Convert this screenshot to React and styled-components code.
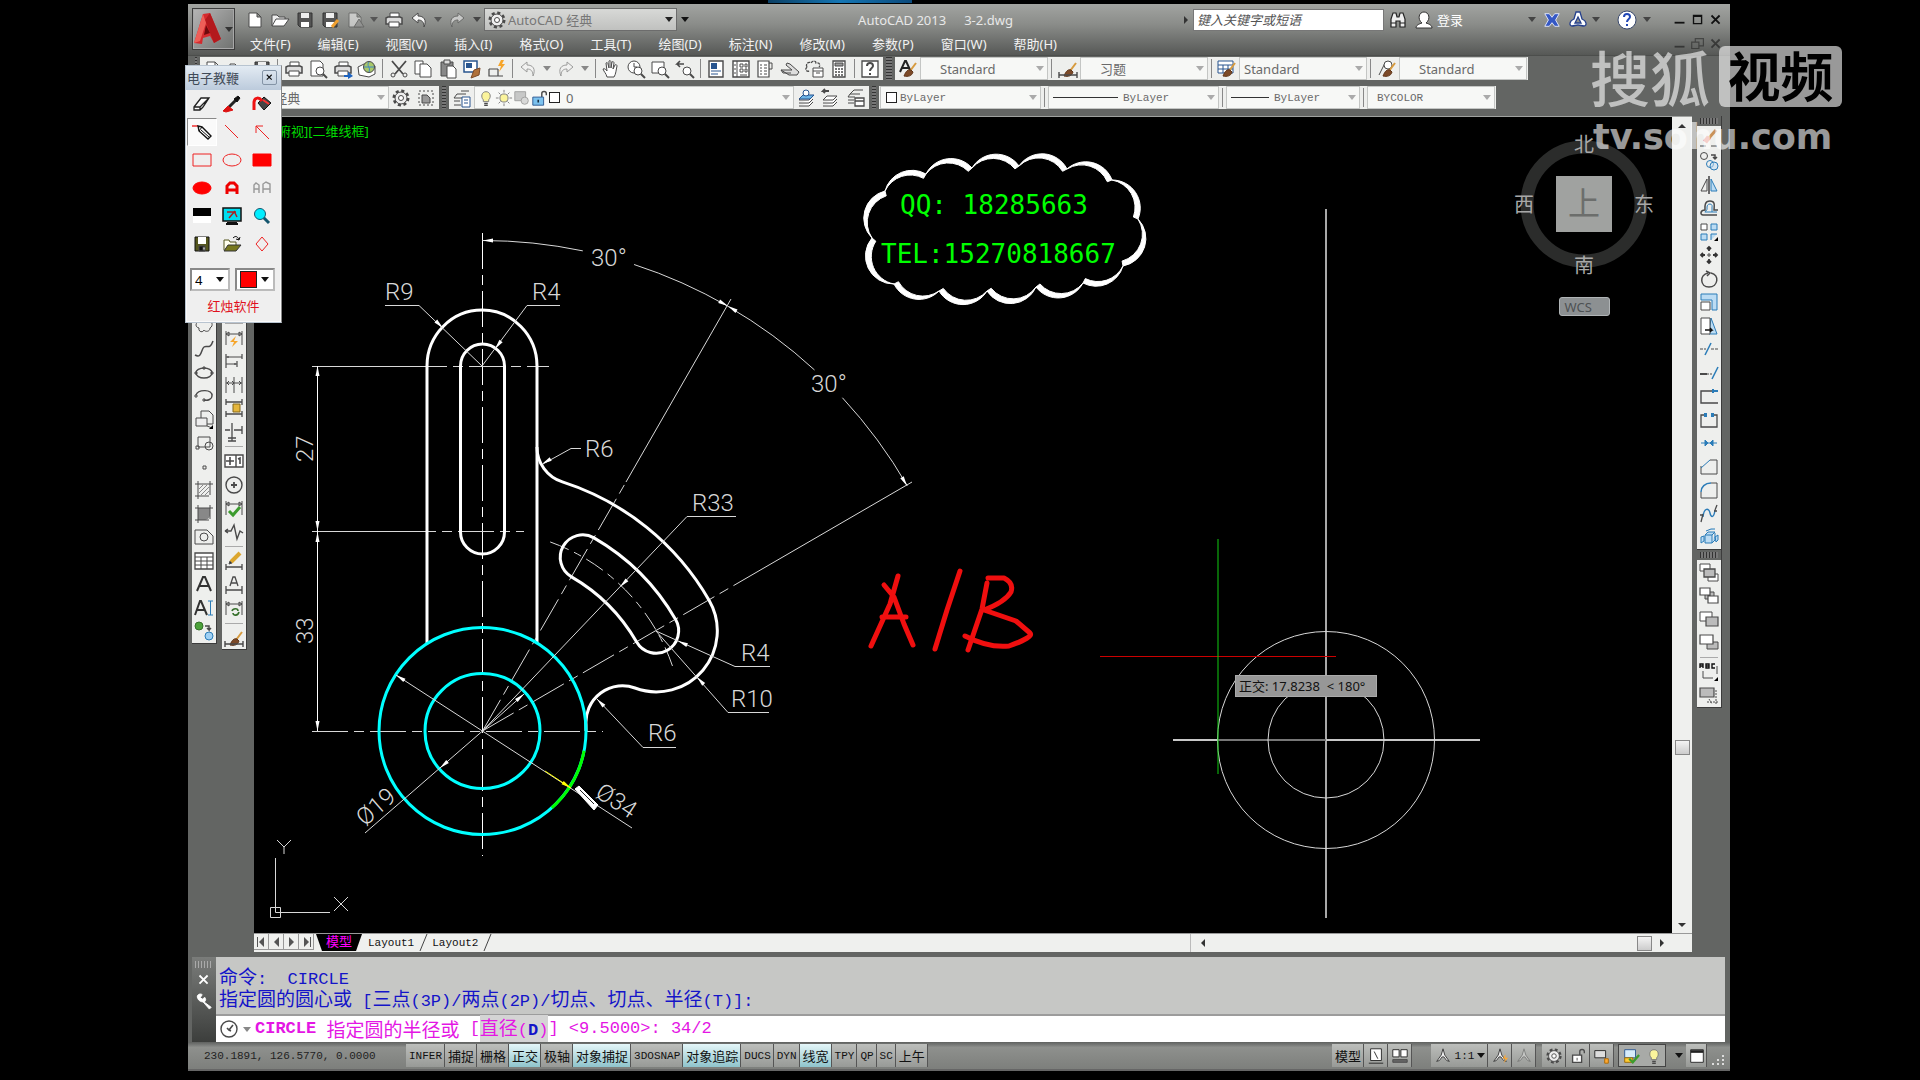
import styled, { createGlobalStyle, css } from 'styled-components';

const GlobalStyle = createGlobalStyle`
  *, *::before, *::after {
    box-sizing: border-box;
  }

  body {
    margin: 0;
    background-color: #000;
    font-family: 'Noto Sans', 'Noto Sans CJK SC', sans-serif;
    font-size: 13px;
  }

  button, input, select {
    font: inherit;
    color: inherit;
    margin: 0;
    padding: 0;
    border: 0;
    border-radius: 0;
    background: none;
    outline: none;
  }
`;

/* ---------- Icons, all on a 20 x 20 grid ---------- */

const BLUE = '#2b7cb8';

const sheet = <path d='M4 3h8l4 4v10H4zM12 3v4h4' fill='#fff' />;
const floppy = (
  <>
    <path d='M3 3h14v14H5l-2-2z' fill='#555' stroke='#333' />
    <path d='M6 3h8v5H6z' fill='#eee' stroke='none' />
    <path d='M6 12h8v5H6z' fill='#fff' stroke='none' />
  </>
);
const printer = (
  <>
    <path d='M6 7V3h9v4' fill='#fff' />
    <path d='M2 8l2-1h12l2 1v6H2z' fill='#ddd' strokeWidth='1.5' />
    <path d='M5 12h10v5H5z' fill='#fff' />
  </>
);
const lens = (
  <>
    <circle cx='12' cy='12' r='4' fill='#fff' />
    <path d='M15 15l4 4' strokeWidth='2' />
  </>
);
const brush = (
  <>
    <path d='M18 4l-6 8' stroke='#d79b3f' strokeWidth='2' />
    <path d='M13 11c-3-1-5 1-7 6 4 1 8 0 9-4z' fill='#7c4a28' stroke='#5f3518' />
  </>
);
const undo = <path d='M3 8l6-5v3c6 0 9 4 6 11 0-5-2-7-6-7v3z' fill='#f4f4f4' />;
const redo = <path d='M17 8l-6-5v3c-6 0-9 4-6 11 0-5 2-7 6-7v3z' fill='#f4f4f4' />;
const dimBase = <path d='M2 3v14M18 3v14M2 6h16M2 6l3-2v4zM18 6l-3-2v4z' />;
const layers = <path d='M2 12l4-4h10l-4 4zM2 15l10 0 4-4M2 18h10l4-4' fill='#fff' />;
const gear = (
  <>
    <circle cx='10' cy='10' r='7' strokeWidth='3' strokeDasharray='3 2.5' />
    <circle cx='10' cy='10' r='6' fill='#eee' />
    <circle cx='10' cy='10' r='2.5' fill='#fff' />
  </>
);
const bulb = (
  <>
    <path d='M7 12C4 9 5 3 10 3s6 6 3 9v2H7z' fill='#fbf49c' stroke='#777' />
    <path d='M8 16h4M8 18h4' strokeWidth='1.5' />
  </>
);
const unlock = (
  <>
    <path d='M12 9V5c0-3 5-3 5 0v2' strokeWidth='1.5' />
    <path d='M4 9h10v8H4z' fill='#fff' strokeWidth='1.5' />
    <path d='M9 12v3' />
  </>
);
const annot = <path d='M10 2l2 7 5 7-3-1-3-4H9l-3 4-3 1 5-7z' fill='#eee' stroke='#333' />;

const glyphs = {
  sheet,
  floppy,
  printer,
  undo,
  redo,
  gear,
  bulb,
  unlock,
  annot,
  folder: (
    <>
      <path d='M2 16V5h5l2 2h6v2' fill='#eee' />
      <path d='M2 16l4-7h13l-5 7z' fill='#fff' />
    </>
  ),
  floppyEdit: (
    <>
      {floppy}
      <path d='M18 10l-6 7' stroke='#f0a030' strokeWidth='3' />
    </>
  ),
  cloudSheet: (
    <g opacity='.5'>
      {sheet}
      <path d='M9 17l5-8 5 8z' fill='#999' />
    </g>
  ),
  preview: (
    <>
      <path d='M3 2h9l3 3v12H3z' fill='#fff' />
      {lens}
    </>
  ),
  publish: (
    <>
      {printer}
      <path d='M11 16h4v-3l5 4-5 3v-2h-4z' fill='#1d63c0' stroke='none' />
    </>
  ),
  cube: (
    <>
      <path d='M1 8l6-3 11 2v8l-6 3-10-2z' fill='#fff' />
      <circle cx='12' cy='8' r='5.5' fill='#a9c96a' />
      <path d='M12 3c-3 4 2 5 0 10M7 8h10' stroke='#3f86c4' />
    </>
  ),
  cut: (
    <>
      <path d='M3 2l11 13M17 2L6 15' strokeWidth='1.8' />
      <circle cx='4' cy='16' r='2' />
      <circle cx='16' cy='16' r='2' />
    </>
  ),
  copy: (
    <>
      <path d='M2 2h8v13H2z' fill='#fff' />
      <path d='M7 5h7l4 4v9H7z' fill='#fff' />
    </>
  ),
  paste: (
    <>
      <path d='M3 3h12v14H3z' fill='#888' />
      <path d='M6 1h6v4H6z' fill='#ddd' />
      <path d='M9 7h6l3 3v9H9z' fill='#fff' />
    </>
  ),
  match: (
    <>
      <path d='M2 2h13v11H2z' fill='#fff' stroke='#28558f' strokeWidth='1.5' />
      <path d='M4 4h6v5H4z' fill='#28558f' stroke='none' />
      <path d='M12 11l6-2-1 7-8 3z' fill='#b0713a' stroke='#7c4a28' />
    </>
  ),
  block: (
    <>
      <path d='M2 10h9M2 10v7h9v-7M2 17h14' strokeWidth='1.2' />
      <path d='M14 1l-3 6h3l-2 6 6-8h-3l2-4z' fill='#f6a52a' stroke='none' />
    </>
  ),
  pan: <path d='M6 18c-1-4-3-5-4-8 2-1 3 1 4 2L5 4c1-1 2 0 2 1l1 4V2c1-1 2 0 2 1v6l1-6c1-1 2 0 2 1l-1 6 2-4c1-1 2 0 2 1-1 4-1 8-3 11z' fill='#fff' />,
  zoomTime: (
    <>
      <circle cx='8' cy='8' r='6' fill='#fff' />
      <path d='M8 4v4h3' />
      {lens}
    </>
  ),
  zoomWin: (
    <>
      <path d='M2 3h12v11H2z' fill='#fff' />
      {lens}
    </>
  ),
  zoomPrev: (
    <>
      <path d='M9 5H2l3-3M2 5l3 3' strokeWidth='1.6' />
      {lens}
    </>
  ),
  props: (
    <>
      <path d='M3 2h14v16H3z' fill='#fff' strokeWidth='1.4' />
      <path d='M5 4h6v6H5z' fill='#28558f' stroke='none' />
      <path d='M5 12h10M5 15h7' stroke='#28558f' />
    </>
  ),
  center: (
    <>
      <path d='M2 2h16v16H2z' fill='#fff' strokeWidth='1.4' />
      <path d='M6 2v16M9 5h3v3H9zM14 5h2v3h-2zM9 10h3v3H9zM14 10h2v3h-2zM3 6h2M3 10h2M3 14h2M9 16h7' />
    </>
  ),
  palettes: (
    <>
      <path d='M3 2h11v16H3z' fill='#fff' strokeWidth='1.2' />
      <path d='M14 4h3v6h-3M5 6h2M9 6h3M5 9h2M9 9h3M5 12h2M9 12h3M5 15h2M9 15h3' />
    </>
  ),
  sheets: <path d='M1 11l8 5h8l2-3-9-8-3-1-1 2 6 5H1l2 3h8' fill='#ddd' />,
  markup: (
    <>
      <path d='M3 8c-2-3 2-6 4-4 2-3 5-2 5 0 3-1 5 2 3 4M3 8c-3 3 0 5 3 4' strokeDasharray='3 1' strokeWidth='1.3' />
      <path d='M9 9h10v9H9zM9 12h10M12 14h4' fill='#fff' />
    </>
  ),
  calc: (
    <>
      <path d='M4 2h12v16H4z' fill='#fff' strokeWidth='1.3' />
      <path d='M6 4h8v3H6z' fill='#999' />
      <path d='M6 10h2M9 10h2M12 10h2M6 13h2M9 13h2M12 13h2M6 16h2M9 16h2M12 16h2' strokeWidth='1.6' />
    </>
  ),
  help: (
    <>
      <path d='M2 2h16v16H2z' fill='#fff' strokeWidth='1.3' />
      <path d='M7 7c0-4 6-4 6 0 0 2-3 2-3 5M10 14v2' strokeWidth='2' />
    </>
  ),
  textStyle: (
    <>
      <path d='M2 13L7 2h1l5 11M4 9h7' stroke='#222' strokeWidth='2' />
      {brush}
    </>
  ),
  dimStyle: (
    <>
      {brush}
      <path d='M1 13v6M19 13v6M1 16h18' strokeWidth='1.4' />
    </>
  ),
  tableStyle: (
    <>
      <path d='M1 2h15v12H1zM1 6h15M6 6v8M11 6v8M1 10h15' fill='#fff' stroke='#28558f' />
      {brush}
    </>
  ),
  leaderStyle: (
    <>
      <path d='M2 16L8 4' />
      <circle cx='11' cy='6' r='4' fill='#fff' />
      {brush}
    </>
  ),
  wsSave: (
    <>
      <path d='M3 3h14v14H3z' strokeDasharray='2 2' />
      <path d='M6 7h5l3 3v5H6z' fill='#999' />
    </>
  ),
  layerProps: (
    <>
      <path d='M9 3h8M5 6h9M2 10h8M2 13h6M2 17h7M5 6L2 10' />
      <path d='M10 9h8v10h-8z' fill='#fff' stroke='#28558f' />
      <path d='M12 12h4M12 15h4' stroke='#28558f' />
    </>
  ),
  sun: (
    <>
      <circle cx='10' cy='10' r='4.5' fill='#fbf49c' stroke='#777' />
      <path d='M10 1v3M10 16v3M1 10h3M16 10h3M4 4l2 2M14 14l2 2M4 16l2-2M14 6l2-2' stroke='#777' />
    </>
  ),
  vpFreeze: (
    <g opacity='.5'>
      <path d='M2 3h12v10H2z' fill='#999' />
      <circle cx='13' cy='13' r='4' fill='#bbb' />
    </g>
  ),
  lockBlue: (
    <>
      <path d='M12 9V5c0-3 5-3 5 0v2' strokeWidth='1.6' />
      <path d='M2 9h12v9H2z' fill='#7cc2ee' stroke='#28558f' />
      <path d='M8 12v3' stroke='#123' strokeWidth='1.6' />
    </>
  ),
  layerCur: (
    <>
      {layers}
      <path d='M2 11l4-4h11l-4 4z' fill='#6db5e8' stroke='#28558f' />
      <circle cx='9' cy='5' r='3' fill='#fff' stroke='#28558f' />
    </>
  ),
  layerPrev: (
    <>
      {layers}
      <path d='M8 3H2l2-2M2 3l2 2' strokeWidth='1.8' />
    </>
  ),
  layerState: (
    <>
      <path d='M8 2h9M4 6h10M4 6L2 9h7M8 2L4 6M2 12h6M2 15h6' />
      <path d='M9 10h9v8H9zM9 13h9' fill='#fff' strokeWidth='1.3' />
    </>
  ),

  line: <path d='M3 17L17 3' />,
  pline: <path d='M3 16V7h6c6 0 6 8 0 8' />,
  rect: <path d='M3 5h14v10H3z' />,
  circle: <circle cx='10' cy='10' r='7' />,
  arc: <path d='M3 16C4 8 9 4 17 4' />,
  polygon: <path d='M10 3l7 5-3 8H6L3 8z' />,
  cloud: <path d='M5 12c-5-1-3-7 1-6 1-4 6-4 7-1 5-2 7 5 3 7 0 4-5 4-6 2-1 3-6 2-5-2z' />,
  spline: <path d='M1 16c7 4 6-6 9-8s6 3 9-6' strokeWidth='1.5' />,
  ellipse: (
    <>
      <ellipse cx='10' cy='10' rx='8' ry='5' strokeWidth='1.4' />
      <path d='M1 9h2v2H1zM17 9h2v2h-2zM9 4h2v2H9z' />
    </>
  ),
  ellArc: (
    <>
      <path d='M2 9c2-6 17-6 16 1 0 3-4 5-8 4' strokeWidth='1.4' />
      <path d='M1 9h2v2H1zM9 13h2v2H9z' />
    </>
  ),
  insert: (
    <>
      <path d='M7 1h8l4 4v9H7z' />
      <path d='M2 8h11v8H2zM13 16l5 2' fill='#eee' />
      <path d='M19 15v4h-4z' fill='#000' stroke='none' />
    </>
  ),
  makeBlock: (
    <>
      <path d='M4 4h12v10H4z' />
      <circle cx='15' cy='13' r='4' />
      <path d='M2 13h3v3H2z' />
    </>
  ),
  point: <path d='M9 9h3v3H9z' />,
  hatch: (
    <>
      <path d='M4 1v18M16 1v14M1 4h18M1 16h14' />
      <path d='M5 9l4-4M5 13l8-8M7 15l8-8M11 15l4-4' stroke='#888' />
    </>
  ),
  gradient: (
    <>
      <path d='M4 4h12v7c0 3-3 5-6 5H4z' fill='#888' stroke='none' />
      <path d='M4 1v18M16 1v14M1 4h18M1 16h14' />
    </>
  ),
  region: (
    <>
      <path d='M1 3h12l6 6v8H1z' />
      <circle cx='10' cy='10' r='4' />
    </>
  ),
  table: (
    <>
      <path d='M1 2h18v16H1z' fill='#fff' strokeWidth='1.3' />
      <path d='M1 6h18M1 10h18M1 14h18M7 6v12M13 6v12' />
    </>
  ),
  mtext: <path d='M3 17L9 3h2l6 14M5 12h10' stroke='#333' strokeWidth='2' />,
  mtextEdit: (
    <>
      <path d='M1 17L6 3h1l6 14M3 12h8' stroke='#333' strokeWidth='2' />
      <path d='M14 3h5M14 17h5M16.5 3v14' stroke={BLUE} />
    </>
  ),
  addSel: (
    <>
      <circle cx='5' cy='5' r='4' fill='#4ca23a' stroke='#35702a' />
      <circle cx='15' cy='15' r='4' fill='#9fd0f4' stroke={BLUE} />
      <path d='M11 5h4v4l-2-2M15 9l2-2' strokeWidth='1.5' />
    </>
  ),

  dimQuick: (
    <>
      {dimBase}
      <path d='M12 8l-6 6h4l-2 5 6-6h-4z' fill='#f6a52a' stroke='none' />
    </>
  ),
  dimLinear: dimBase,
  dimBaseline: <path d='M2 3v14M18 3v5M2 6h16M13 10v6M2 13h11M4 5v2M11 12v2' strokeWidth='1.2' />,
  dimContinue: <path d='M2 2v16M10 2v16M18 2v16M2 8h16M5 6l-2 2 2 2M15 6l2 2-2 2M8 6l2 2-2 2' />,
  dimSpace: (
    <>
      <path d='M2 1v6M18 1v6M2 4h16M2 13v6M18 13v6M2 16h16' strokeWidth='1.3' />
      <path d='M9 6h7v8H9z' fill='#e5b63b' stroke='#86691b' />
    </>
  ),
  dimBreak: <path d='M8 1v18M4 16h8M1 8h5M10 8h8M18 4v8M4 19h8' strokeWidth='1.3' />,
  tolerance: (
    <>
      <path d='M1 4h18v12H1zM12 4v12' fill='#fff' strokeWidth='1.4' />
      <path d='M6 6v8M2 10h8M14 8l2-1v6' strokeWidth='1.6' />
    </>
  ),
  centerMark: (
    <>
      <circle cx='10' cy='10' r='8' strokeWidth='1.4' />
      <path d='M10 7v6M7 10h6' strokeWidth='1.8' />
    </>
  ),
  inspect: (
    <>
      {dimBase}
      <path d='M5 13l4 4 7-8' stroke='#3c9c2e' strokeWidth='3' />
    </>
  ),
  jog: <path d='M1 9h6l3-6 3 14 3-8 3 2M1 9l3-2M1 9l3 2' strokeWidth='1.4' />,
  dimEdit: (
    <>
      <path d='M2 13v6M18 13v6M2 16h16' strokeWidth='1.3' />
      <path d='M16 2L7 11' stroke='#dca62e' strokeWidth='4' />
      <path d='M8 12l-3 1 1-3' fill='#333' />
    </>
  ),
  dimText: <path d='M2 11v8M18 11v8M2 15h16M6 11l3-9h2l3 9M7 8h6' strokeWidth='1.3' />,
  dimUpdate: (
    <>
      {dimBase}
      <path d='M8 13c1-3 6-3 6 0M15 14c-1 4-6 4-6 1' stroke='#35702a' strokeWidth='1.6' />
    </>
  ),

  erase: (
    <>
      <path d='M17 2L9 11' stroke='#c9925a' strokeWidth='3' />
      <path d='M10 9L6 14' stroke='#e8897c' strokeWidth='5' />
      <path d='M1 18h6M12 18h6' />
    </>
  ),
  copyObj: (
    <>
      <circle cx='5' cy='5' r='3.5' />
      <path d='M12 4h4v4M14 6l2 2 2-2' strokeWidth='1.5' />
      <circle cx='11' cy='13' r='3.5' stroke={BLUE} />
      <circle cx='15' cy='15' r='4' stroke={BLUE} fill='#bcdcf3' fillOpacity='.5' />
    </>
  ),
  mirror: (
    <>
      <path d='M8 4v12H2z' />
      <path d='M12 4v12h6z' fill='#bcdcf3' stroke={BLUE} />
      <path d='M10 1v18' strokeWidth='1.6' />
    </>
  ),
  offset: (
    <>
      <path d='M18 17H4c-3 0-3-5 2-5 0-3-1-9 5-9s4 6 4 9h4' strokeWidth='1.5' />
      <path d='M18 14H6c-1 0 3-1 2-5 0-4 6-4 5 0v5' stroke={BLUE} />
    </>
  ),
  array: (
    <>
      <path d='M2 2h6v6H2z' fill='#fff' />
      <path d='M12 2h6v6h-6zM2 12h6v6H2zM12 18v-6h6' fill='#bcdcf3' stroke={BLUE} />
      <path d='M19 15v4h-4z' fill='#000' stroke='none' />
    </>
  ),
  move: (
    <>
      <path d='M10 2v4M10 14v4M2 10h4M14 10h4M8 4l2-2 2 2M8 16l2 2 2-2M4 8l-2 2 2 2M16 8l2 2-2 2' strokeWidth='1.8' stroke='#333' />
      <path d='M9 9h2v2H9z' />
    </>
  ),
  rotate: <path d='M9 4c-9 2-8 14 1 14s11-12 2-14M7 2l4 2-3 3' strokeWidth='1.5' />,
  scale: (
    <>
      <path d='M2 2h16v16h-5V8H2z' fill='#bcdcf3' stroke={BLUE} />
      <path d='M2 10h9v8H2z' fill='#fff' />
    </>
  ),
  stretch: (
    <>
      <path d='M12 2l6 16h-8z' fill='#bcdcf3' stroke={BLUE} />
      <path d='M2 2h9v16H2z' fill='#fff' />
      <path d='M6 14h7l-2-2M13 14l-2 2' stroke='#111' strokeWidth='1.4' />
    </>
  ),
  trim: (
    <>
      <path d='M1 10h6M12 10h7' strokeDasharray='3 1' />
      <path d='M12 4L6 16' stroke={BLUE} strokeWidth='1.5' />
    </>
  ),
  extend: (
    <>
      <path d='M1 11h7' strokeWidth='2' />
      <path d='M8 11h6' strokeDasharray='2 1' />
      <path d='M19 4l-6 12' stroke={BLUE} strokeWidth='1.5' />
    </>
  ),
  breakPt: (
    <>
      <path d='M14 5H2v12h17' strokeWidth='1.4' />
      <path d='M13 5h6M14 3v4' stroke={BLUE} strokeWidth='2' />
    </>
  ),
  breakObj: (
    <>
      <path d='M6 5H2v12h16V5h-4' strokeWidth='1.3' />
      <path d='M5 5h3M12 5h3' stroke={BLUE} strokeWidth='4' />
    </>
  ),
  join: <path d='M2 10h16M6 7l3 3-3 3zM14 7l-3 3 3 3z' stroke={BLUE} fill={BLUE} />,
  chamfer: (
    <>
      <path d='M2 9v8h16V3h-7' />
      <path d='M2 11l9-8' stroke={BLUE} />
    </>
  ),
  fillet: (
    <>
      <path d='M2 12v6h16V3h-6' />
      <path d='M2 12c0-5 4-9 10-9' stroke={BLUE} strokeWidth='1.5' />
    </>
  ),
  blend: (
    <>
      <path d='M4 13c1-10 6-9 7-4s4 5 5-3' stroke={BLUE} strokeWidth='1.4' />
      <path d='M2 18l2-8M16 6l2-5M1 11h3M15 7h3' strokeWidth='1.3' />
    </>
  ),
  explode: <path d='M6 8h7v8H6zM6 8l3-3h7l-3 3M16 6v7l-3 3M2 10l3-1v5l-3 2zM16 10l3-2v5l-2 2zM7 4l5-2h4' fill='#bcdcf3' stroke={BLUE} />,
  toFront: (
    <>
      <path d='M1 2h10v7H1zM9 12h10v7H9z' fill='#fff' />
      <path d='M5 7h11v8H5z' fill='#bbb' strokeWidth='1.3' />
    </>
  ),
  toBack: (
    <>
      <path d='M6 7h9v7H6z' fill='#bbb' />
      <path d='M1 3h10v7H1zM9 11h10v7H9z' fill='#fff' strokeWidth='1.2' />
    </>
  ),
  above: (
    <>
      <path d='M1 3h12v9H1z' fill='#fff' />
      <path d='M7 8h12v9H7z' fill='#bbb' strokeWidth='1.2' />
    </>
  ),
  under: (
    <>
      <path d='M8 10h11v7H8z' fill='#bbb' />
      <path d='M1 3h13v9H1z' fill='#fff' strokeWidth='1.2' />
    </>
  ),
  textFront: (
    <>
      <path d='M1 6V2h3v4M1 4h3M7 2h3v4H7zM7 4h3M16 2h-3v4h3' stroke='#111' strokeWidth='1.4' />
      <path d='M4 9v7h10M18 4v8' />
      <path d='M19 15v4h-4z' fill='#000' stroke='none' />
    </>
  ),
  hatchBack: (
    <>
      <path d='M1 3h14v9H1z' fill='#bbb' strokeWidth='1.2' />
      <path d='M8 17h11M17 5v14M10 14l3 5' strokeDasharray='2 1' />
    </>
  ),

  binoculars: <path d='M3 17V9l2-6h3l1 4h2l1-4h3l2 6v8h-5v-6H8v6zM3 13h5M12 13h5' fill='#eee' stroke='#222' strokeWidth='1.2' />,
  user: <path d='M2 18c0-3 3-4 6-5-5-4-3-11 2-11s7 7 2 11c3 1 6 2 6 5z' fill='#fff' stroke='#333' />,
  exchange: <path d='M2 3h5l3 4 3-4h5l-4 7 4 7h-5l-3-4-3 4H2l4-7z' fill='#3558c4' stroke='#e8ecff' />,
  a360: <path d='M8 2h4l2 7c5 2 5 7 2 7-2 0-4-1-6-1s-4 1-6 1c-3 0-3-5 2-7zM10 7l-3 6h6z' fill='#fff' stroke='#25408c' strokeWidth='1.3' />,
  helpRound: (
    <>
      <circle cx='10' cy='10' r='9' fill='#fff' stroke='#39496e' />
      <path d='M7 7c0-4 6-4 6 0 0 2-3 2-3 5M10 14v2' stroke='#2147b5' strokeWidth='2' />
    </>
  ),
  min: <path d='M4 13h11' stroke='#111' strokeWidth='2' />,
  max: <path d='M5 5h9v9H5zM5 6h9' stroke='#111' strokeWidth='1.5' />,
  restore: <path d='M3 8h8v7H3zM7 8V4h9v8h-5' stroke='#222' strokeWidth='1.3' />,
  close: <path d='M5 5l9 9M14 5l-9 9' stroke='#111' strokeWidth='2' />,

  eraser: <path d='M2 13l7-9h8l-6 9-3 3H2zM2 13h6l9-9M8 13v3' fill='#fff' stroke='#222' strokeWidth='1.3' />,
  dropper: (
    <>
      <path d='M15 5l-9 9' stroke='#222' strokeWidth='3' />
      <path d='M16 2l2 2-3 4-3-3z' fill='#111' stroke='#111' />
      <path d='M6 12l-5 5 3 1 7-2z' fill='#d11' stroke='#d11' />
    </>
  ),
  bucket: (
    <>
      <path d='M6 9l6-6 7 6-7 7z' fill='#444' stroke='#111' />
      <path d='M2 16V8c1-5 5-5 8-1' stroke='#e11' strokeWidth='3' />
      <path d='M11 6l6 4' stroke='#f33' strokeWidth='2' />
    </>
  ),
  marker: (
    <>
      <path d='M0 4h6' stroke='#e11' strokeWidth='1.3' />
      <path d='M6 4l4 1 9 9-3 3-9-8z' fill='#fff' stroke='#111' strokeWidth='1.4' />
      <path d='M10 5l-3 4M9 8l8 7' stroke='#111' />
    </>
  ),
  redLine: <path d='M3 3l13 13' stroke='#e22' />,
  redArrow: <path d='M4 4l13 13M4 11V4h7' stroke='#e22' />,
  redRect: <path d='M1 4h18v12H1z' stroke='#e22' />,
  redEllipse: <ellipse cx='10' cy='10' rx='9' ry='6' stroke='#e22' />,
  redBox: <path d='M1 4h18v12H1z' fill='#f00' stroke='#f00' />,
  redOval: <ellipse cx='10' cy='10' rx='9' ry='6' fill='#f00' stroke='#f00' />,
  redA: <path d='M5 16V8l3-3h4l3 3v8M5 12h10' stroke='#e00' strokeWidth='3' />,
  grayAA: <path d='M2 15V7l2-2 3 2v8M2 11h5M11 15V6l3-2 4 2v9M11 11h7' stroke='#999' strokeWidth='1.4' />,
  board: (
    <>
      <path d='M1 10h18v7H1z' fill='#fff' stroke='none' />
      <path d='M1 2h18v8H1z' fill='#000' stroke='none' />
    </>
  ),
  screen: (
    <>
      <path d='M1 2h18v13H1z' fill='#0de' stroke='#111' strokeWidth='1.5' />
      <path d='M5 6h9M7 12l6-7M12 5l3 6' stroke='#a22' strokeWidth='1.5' />
      <path d='M5 17h10M4 18h12' stroke='#111' strokeWidth='2' />
    </>
  ),
  magnify: (
    <>
      <path d='M11 11l6 6' stroke='#14566e' strokeWidth='3' />
      <circle cx='8' cy='8' r='5.5' fill='#0ef' stroke='#14566e' />
    </>
  ),
  oliveSave: (
    <>
      <path d='M3 3h14v14H3z' fill='#55561e' stroke='#111' />
      <path d='M6 3h8v7H6z' fill='#fff' stroke='none' />
      <path d='M7 12h6v5H7z' fill='#111' />
      <path d='M11 13h2v3h-2z' fill='#fff' />
    </>
  ),
  oliveOpen: (
    <>
      <path d='M2 16V6h5l1 2h6v3' fill='#ffe' stroke='#55561e' />
      <path d='M2 17l4-6h13l-5 6z' fill='#77781e' stroke='#333' />
      <path d='M11 4c3-3 5-1 6 2l1-3M17 6l-3-1' stroke='#111' />
    </>
  ),
  diamond: <path d='M10 3l6 7-6 7-6-7z' stroke='#e22' />,

  wrench: <path d='M3 7c-2-4 3-6 5-4L6 6l2 2 3-2c2 3 0 5-1 5l8 6-2 2-7-8c-2 0-5-1-6-4z' fill='#fff' stroke='none' />,
  prompt: (
    <>
      <circle cx='10' cy='10' r='8' strokeWidth='1.4' />
      <path d='M10 11l4-5M8 9l2 2 2 1' strokeWidth='1.6' />
    </>
  ),
  modelTab: (
    <>
      <path d='M4 2h12v13H4z' fill='#fff' stroke='#222' />
      <path d='M8 5l4 8M2 18h16' stroke='#222' />
    </>
  ),
  quickView: (
    <>
      <path d='M2 3h7v8H2zM11 3h7v8h-7z' fill='#fff' stroke='#222' />
      <path d='M2 14h16v3H2z' fill='#666' />
    </>
  ),
  annotSun: (
    <>
      {annot}
      <path d='M16 8l-3 5h3l-2 5 5-6h-3z' fill='#fa3' stroke='none' />
    </>
  ),
  annotOff: <g opacity='.4'>{annot}</g>,
  isolate: (
    <>
      <path d='M2 4h12v8H2z' fill='#ddd' stroke='#222' />
      <path d='M13 13h4v5h-4z' fill='#fa3' stroke='#a60' />
    </>
  ),
  hardware: (
    <>
      <path d='M3 3h12v9H3z' fill='#d7ecfa' stroke='#28558f' />
      <path d='M3 12h9v5H3z' fill='#fc3' stroke='#960' />
      <path d='M8 13l4 4 7-8' stroke='#3c9c2e' strokeWidth='2.5' />
    </>
  ),
  clean: (
    <>
      <path d='M3 3h14v14H3z' fill='#fff' stroke='#222' />
      <path d='M3 5h14' stroke='#222' strokeWidth='3' />
    </>
  ),
};

const Svg = styled.svg`
  display: block;
  flex: none;
  fill: none;
  stroke: #4a4a4a;
`;

function Icon({ name, size = 20 }) {
  return (
    <Svg width={size} height={size} viewBox='0 0 20 20' aria-hidden='true'>
      {glyphs[name]}
    </Svg>
  );
}

const Triangle = styled.span`
  display: block;
  flex: none;
  border: 4px solid transparent;
  border-top: 5px solid ${(props) => props.$color || '#888'};
  border-bottom: 0;
`;

/* ---------- Window frame ---------- */

const Page = styled.div`
  min-height: 100vh;
  display: flex;
  flex-direction: column;
  padding: 4px 190px 9px 188px;
  background-image: linear-gradient(90deg, #0b3f64, #1576b4, #0b4a7c);
  background-size: 144px 3px;
  background-position: 768px 0;
  background-repeat: no-repeat;
  position: relative;
`;

const Window = styled.div`
  flex: 1;
  display: flex;
  flex-direction: column;
  background-color: #636563;
`;

const TitleBar = styled.header`
  display: flex;
  height: 52px;
  padding: 4px 5px 0 4px;
  background: linear-gradient(#a2a4a1, #8a8c89 40%, #565856);
  border-bottom: 1px solid #4c4e4c;
`;

const AppButton = styled.button`
  width: 43px;
  height: 42px;
  display: flex;
  align-items: center;
  gap: 2px;
  background: linear-gradient(135deg, #b5b5b5, #707270);
  border: 1px solid #3c3c3c;
  box-shadow: inset 0 0 0 1px #a8a8a8;
`;

const TitleRows = styled.div`
  flex: 1;
  margin-left: 7px;
`;

const TitleRow = styled.div`
  display: flex;
  align-items: center;
  height: ${(props) => props.$h || 23}px;
`;

const IconButton = styled.button`
  flex: none;
  width: ${(props) => props.$w || 25}px;
  height: 23px;
  display: flex;
  align-items: center;
  justify-content: center;
  opacity: ${(props) => (props.$dim ? 0.55 : 1)};
`;

const Spacer = styled.span`
  flex: none;
  width: ${(props) => props.$w}px;
`;

const Title = styled.h1`
  flex: 1;
  margin: 0;
  font-size: 13px;
  font-weight: 400;
  color: #e8e8e8;
  display: flex;
  justify-content: center;
  gap: 18px;
`;

const SearchBox = styled.input`
  width: 191px;
  height: 22px;
  padding-left: 3px;
  background-color: #fff;
  border: 1px solid #777;
  font-style: italic;

  &::placeholder {
    color: #555;
    opacity: 1;
  }
`;

const SignIn = styled.button`
  width: 28px;
  color: #fff;
`;

const Menu = styled.nav`
  display: flex;
  flex: 1;
  gap: 27px;
  padding-left: 8px;
  color: #f2f2f2;
`;

/* ---------- Toolbars ---------- */

const ToolRows = styled.div`
  display: flex;
  flex-direction: column;
  gap: 6px;
  padding: 1px 4px 7px;
`;

const ToolRow = styled.div`
  display: flex;
  height: 23px;
`;

const Bar = styled.div`
  display: flex;
  align-items: center;
  padding: 0 1px;
  background-color: #eeefed;
`;

const ToolButton = styled.button`
  flex: none;
  width: 24px;
  height: 23px;
  display: flex;
  align-items: center;
  justify-content: center;
  opacity: ${(props) => (props.$dim ? 0.5 : 1)};

  &:nth-of-type(even) {
    width: 25px;
  }
`;

const Caret = styled.button`
  flex: none;
  width: 14px;
  height: 23px;
  display: flex;
  align-items: center;
  justify-content: center;
`;

const Divider = styled.span`
  flex: none;
  width: 1px;
  height: 19px;
  margin: 0 3px;
  background-color: #888;
`;

const Grip = styled.span`
  flex: none;
  width: ${(props) => props.$w || 12}px;
  align-self: stretch;
  border: solid #636563;
  border-width: 0 3px;
  background: repeating-linear-gradient(#333 0 1px, #777 1px 3px);
`;

const Field = styled.label`
  position: relative;
  flex: none;
  display: flex;
  align-items: center;
  gap: ${(props) => props.$gap || 0}px;
  width: ${(props) => props.$w}px;
  height: 23px;
  padding: 0 3px 0 ${(props) => props.$pad || 4}px;
  background-color: #f7f8f6;
  border: 1px solid #c4c6c4;
  color: #6a6a6a;

  select {
    appearance: none;
    flex: 1;
    min-width: 0;
    height: 20px;
    ${(props) =>
      props.$mono &&
      css`
        font-family: 'Liberation Mono', monospace;
        font-size: 11px;
      `}
  }
`;

const WorkspaceField = styled(Field)`
  background: linear-gradient(#d8d9d7, #c0c1bf);
  border-color: #6c6c6c;
  color: #777;
`;

const Swatch = styled.span`
  flex: none;
  width: ${(props) => props.$size || 11}px;
  height: ${(props) => props.$size || 11}px;
  background-color: ${(props) => props.$color || '#fff'};
  border: 1px solid #222;
`;

const Stroke = styled.span`
  flex: none;
  width: ${(props) => props.$w}px;
  height: 1px;
  background-color: #333;
`;

function Select({ label, value, w, pad, gap, mono, caret, children, as: Box = Field }) {
  return (
    <Box $w={w} $pad={pad} $gap={gap} $mono={mono}>
      {children}
      <select aria-label={label} defaultValue={value}>
        <option>{value}</option>
      </select>
      <Triangle $color={caret || '#aaa'} />
    </Box>
  );
}

/* ---------- Docks ---------- */

const Main = styled.main`
  flex: 1;
  display: flex;
`;

const Dock = styled.aside`
  flex: none;
  display: flex;
  align-items: flex-start;
  gap: 5px;
  width: ${(props) => props.$w}px;
  padding-left: ${(props) => props.$pad}px;
`;

const DockColumn = styled.div`
  width: 25px;
`;

const VBar = styled.div`
  background-color: #eeefed;
  border: solid #3c3c3c;
  border-width: 0 1px 1px 0;

  &::before {
    content: '';
    display: block;
    height: 10px;
    border: solid #636563;
    border-width: 2px 3px;
    background: repeating-linear-gradient(90deg, #333 0 1px, #777 1px 3px);
  }
`;

const VButton = styled.button`
  width: 24px;
  height: 23px;
  display: flex;
  align-items: center;
  justify-content: center;

  &:nth-of-type(even) {
    height: 24px;
  }
`;

const VDivider = styled.hr`
  margin: 3px 3px 2px;
  border: 0;
  height: 1px;
  background-color: #aaa;
`;

function VToolbar({ label, items }) {
  return (
    <VBar role='toolbar' aria-label={label}>
      {items.map((name, i) =>
        name === '|' ? (
          <VDivider key={i} />
        ) : (
          <VButton key={i} aria-label={name}>
            <Icon name={name} />
          </VButton>
        )
      )}
    </VBar>
  );
}

const drawTools = [
  'line', 'line', 'pline', 'polygon', 'rect', 'arc', 'circle', 'circle', 'cloud', 'spline', 'ellipse',
  'ellArc', 'insert', 'makeBlock', 'point', 'hatch', 'gradient', 'region', 'table', 'mtext', 'mtextEdit', 'addSel',
];

const dimTools = [
  'dimLinear', 'line', 'arc', 'point', '|', 'circle', 'circle', 'circle', 'line', '|', 'dimQuick', 'dimBaseline',
  'dimContinue', 'dimSpace', 'dimBreak', '|', 'tolerance', 'centerMark', 'inspect', 'jog', '|', 'dimEdit',
  'dimText', 'dimUpdate', '|', 'dimStyle',
];

const modifyTools = [
  'erase', 'copyObj', 'mirror', 'offset', 'array', 'move', 'rotate', 'scale', 'stretch', 'trim', 'extend',
  'breakPt', 'breakObj', 'join', 'chamfer', 'fillet', 'blend', 'explode',
];

const orderTools = ['toFront', 'toBack', 'above', 'under', '|', 'textFront', 'hatchBack'];

const standardTools = [
  'sheet', 'folder', 'floppy', '|', 'printer', 'preview', 'publish', 'cube', '|', 'cut', 'copy', 'paste',
  'match', 'block', '|', 'undo', 'v', 'redo', 'v', '|', 'pan', 'zoomTime', 'zoomWin', 'zoomPrev', '|',
  'props', 'center', 'palettes', 'sheets', 'markup', 'calc', '|', 'help',
];

/* ---------- Drawing area ---------- */

const Center = styled.section`
  flex: 1;
  min-width: 0;
  display: flex;
  flex-direction: column;
  border-top: 1px solid #a0a2a0;
  margin-bottom: 5px;
`;

const CanvasRow = styled.div`
  flex: 1;
  display: flex;
`;

const Canvas = styled.div`
  flex: 1;
  min-width: 0;
  position: relative;
  background-color: #000;
`;

const Drawing = styled.svg`
  display: block;
  width: 100%;
  height: 100%;
  fill: none;
  stroke: #d8d8d8;

  text {
    stroke: none;
    fill: #d8d8d8;
    font-family: Roboto, sans-serif;
    font-weight: 300;
    font-size: 24px;
  }

  .note {
    fill: #0f0;
    font-family: 'DejaVu Sans Mono', monospace;
    font-weight: 400;
    font-size: 26px;
  }
`;

const ViewLabel = styled.p`
  position: absolute;
  top: 4px;
  left: 7px;
  margin: 0;
  color: #0d0;
  font-size: 13px;
`;

const ViewCube = styled.div`
  position: absolute;
  top: 12px;
  right: 18px;
  display: flex;
  flex-direction: column;
  align-items: center;
  gap: 18px;

  svg {
    overflow: visible;
  }

  text {
    fill: #a8a8a8;
    font-size: 20px;
    text-anchor: middle;
  }
`;

const WcsButton = styled.button`
  width: 51px;
  height: 19px;
  padding-left: 5px;
  text-align: left;
  line-height: 16px;
  border-radius: 3px;
  background-color: #8c9092;
  border: 1px solid #b0b4b6;
  color: #4d5153;
`;

const Tooltip = styled.div`
  position: absolute;
  top: 558px;
  left: 981px;
  width: 142px;
  height: 22px;
  padding: 0 3px;
  line-height: 20px;
  background-color: #979797;
  border: 1px solid #aaa;
  color: #111;
  white-space: pre;
`;

const VScroll = styled.div`
  flex: none;
  width: 20px;
  display: flex;
  flex-direction: column;
  align-items: center;
  padding: 7px 0 6px;
  background-color: #eff0ee;
`;

const Thumb = styled.span`
  display: block;
  width: 15px;
  height: 15px;
  border: 1px solid #888;
  background: linear-gradient(#f4f4f4, #ccc);
`;

const VThumb = styled(Thumb)`
  margin: auto 0 168px;
`;

const HThumb = styled(Thumb)`
  margin: 0 8px 0 auto;
`;

const Arrow = styled.span`
  display: block;
  border: 4px solid transparent;
  ${(props) => props.$dir === 'up' && 'border-bottom-color: #333; border-top: 0;'}
  ${(props) => props.$dir === 'down' && 'border-top-color: #333; border-bottom: 0;'}
  ${(props) => props.$dir === 'left' && 'border-right-color: #333; border-left: 0;'}
  ${(props) => props.$dir === 'right' && 'border-left-color: #333; border-right: 0;'}
`;

const TabRow = styled.div`
  display: flex;
  height: 19px;
  background-color: #eff0ee;
  border-top: 1px solid #999;
  font-family: 'Liberation Mono', 'Noto Sans CJK SC', monospace;
  font-size: 11px;
  color: #111;
`;

const TabNav = styled.button`
  width: 15px;
  height: 16px;
  display: flex;
  align-items: center;
  justify-content: center;
  border: solid #999;
  border-width: 0 1px 1px 0;
  color: #555;
`;

const Tab = styled.button`
  position: relative;
  height: 17px;
  padding: 0 ${(props) => (props.$active ? 10 : 4)}px;
  ${(props) =>
    props.$active &&
    css`
      margin: 0 2px;
      background-color: #000;
      color: #f0f;
      font-size: 13px;
      line-height: 16px;
      clip-path: polygon(0 0, 100% 0, calc(100% - 6px) 100%, 6px 100%);
    `}
`;

const HScroll = styled.div`
  width: 502px;
  margin-left: auto;
  display: flex;
  align-items: center;
  padding: 0 28px 0 10px;
  border-left: 1px solid #bbb;
`;

const CX = 482.5;
const CY = 731;

// angle is measured clockwise from the vertical centre line
function polar(r, deg) {
  const a = (deg * Math.PI) / 180;
  return `${CX + r * Math.sin(a)} ${CY - r * Math.cos(a)}`;
}

function arcPath(r, from, to) {
  return `M${polar(r, from)}A${r} ${r} 0 0 1 ${polar(r, to)}`;
}

const cloudCusps = [
  [926, 174], [972, 168], [1019, 166], [1067, 169], [1112, 180], [1138, 219], [1123, 266],
  [1083, 283], [1036, 287], [987, 291], [939, 291], [894, 284], [872, 238], [885, 191],
];

// every lobe is a crescent that swells toward its clockwise end
function cloudPath() {
  const r = 28;
  return cloudCusps
    .map(([x2, y2], i) => {
      const [x1, y1] = cloudCusps.at(i - 1);
      const dx = x2 - x1;
      const dy = y2 - y1;
      const chord = Math.hypot(dx, dy);
      const h = Math.sqrt(r * r - (chord * chord) / 4) / chord;
      const ix = x2 + (((x1 + x2) / 2 - dy * h - x2) / r) * 5;
      const iy = y2 + (((y1 + y2) / 2 + dx * h - y2) / r) * 5;
      return `M${x1} ${y1}A${r} ${r} 0 0 1 ${x2} ${y2}L${ix} ${iy}A${r} ${r} 0 0 0 ${x1} ${y1}z`;
    })
    .join('');
}

// filled arrow head with its tip at x, y
function Head({ x, y, deg, color = '#fff' }) {
  return <path d='M0 0l-10-2v4z' fill={color} stroke='none' transform={`translate(${x} ${y}) rotate(${deg})`} />;
}

function PartDrawing() {
  return (
    <g>
      {/* centre lines */}
      <g strokeDasharray='36 6 10 6'>
        <path d='M482.5 233V856' stroke='#fff' />
        <path d='M411 366.5H549M400 531.5H524M312 731.5H603' />
        <path d={`M${CX} ${CY}L626 482M${CX} ${CY}L738 583`} />
        <path d={arcPath(200.8, 19.7, 72.7)} strokeDasharray='20 6 8 6' />
      </g>
      <path d='M312 366.5H411M312 531.5H400M626 482L731 299M738 583L912 482' />

      {/* outline */}
      <g stroke='#fff' strokeWidth='3'>
        <path d='M427 643V366A55 56 0 0 1 537 366V643' />
        <path d='M460.5 366A22 22 0 0 1 504.5 366V532A22 22 0 0 1 460.5 532z' />
        <path
          d={`M537 447A36.5 36.5 0 0 0 562.4 481.9A261.6 261.6 0 0 1 ${polar(261.6, 60)}
            A61 61 0 0 1 635 688A36.5 36.5 0 0 0 586 724.3V731`}
        />
        <path
          d={`M${polar(223, 30)}A223 223 0 0 1 ${polar(223, 60)}A22.5 22.5 0 0 1 ${polar(178, 60)}
            A178 178 0 0 0 ${polar(178, 30)}A22.5 22.5 0 0 1 ${polar(223, 30)}z`}
        />
      </g>
      <g stroke='#0ff' strokeWidth='3'>
        <circle cx={CX} cy={CY} r='103.5' />
        <circle cx={CX} cy={CY} r='57.5' />
        <path d={arcPath(103.5, 101, 138)} stroke='#0f0' />
      </g>

      {/* dimensions */}
      <path d='M317.5 366V731' stroke='#fff' />
      <Head x={317.5} y={366} deg={-90} />
      <Head x={317.5} y={531} deg={90} />
      <Head x={317.5} y={532} deg={-90} />
      <Head x={317.5} y={731} deg={90} />
      <text transform='translate(313 462) rotate(-90)'>27</text>
      <text transform='translate(313 644) rotate(-90)'>33</text>

      <path d={arcPath(490.5, 0, 11.8)} />
      <path d={arcPath(490.5, 18, 30)} />
      <path d={arcPath(490.5, 30, 42.6)} />
      <path d={arcPath(490.5, 47.2, 60)} />
      <Head x={483} y={240.5} deg={180} />
      <Head x={728} y={306} deg={28} />
      <Head x={728} y={306} deg={212} />
      <Head x={907} y={486} deg={60} />
      <text x='591' y='266'>30°</text>
      <text x='811' y='392'>30°</text>

      <path d='M385 305.5H419L482 366L527 305.5H560' />
      <Head x={443} y={328} deg={44} />
      <Head x={495} y={349} deg={127} />
      <text x='385' y='300'>R9</text>
      <text x='532' y='300'>R4</text>

      <path d='M543 464L571 448.5H581' />
      <Head x={542} y={464} deg={150} />
      <text x='585' y='457'>R6</text>

      <path d={`M736 516.5H687L${CX} ${CY}`} />
      <Head x={620} y={587} deg={134} />
      <text x='692' y='511'>R33</text>

      <path d='M770 666.5H735L656 631L728 712.5H769M676 747.5H643L597 699' />
      <Head x={678} y={641} deg={204} />
      <Head x={697} y={677} deg={228} />
      <Head x={597} y={699} deg={226} />
      <text x='741' y='661'>R4</text>
      <text x='731' y='707'>R10</text>
      <text x='648' y='741'>R6</text>

      <path d={`M396 675L632 828M365 833L${CX} ${CY}L524 694`} />
      <path d='M545 771L571 788' stroke='#ff0' />
      <Head x={396} y={675} deg={213} />
      <Head x={571} y={788} deg={33} color='#ff0' />
      <Head x={440} y={768} deg={139} />
      <Head x={524} y={694} deg={-40} />
      <text transform='translate(365 827) rotate(-41)'>Ø19</text>
      <text transform='translate(594 796) rotate(33)'>Ø34</text>
      <path d='M575 789l4-3 19 19-4 5z' fill='#fff' stroke='#fff' />
      <path d='M580 790l14 14' stroke='#222' />

      {/* coordinate system mark */}
      <path d='M275.5 858V912.5H330M270.5 907.5h10v10h-10z' />
      <path d='M277 840l7 7 7-7M284 847v7M334 897l14 14M348 897l-14 14' />
    </g>
  );
}

function Sketch() {
  return (
    <g>
      <g stroke='#a8a8a8' strokeWidth='2'>
        <path d='M1326 209V918' />
        <path d='M1173 740H1218M1326 740H1480' stroke='#c8c8c8' />
        <path d='M1218 740H1326' stroke='#777' />
      </g>
      <circle cx='1326' cy='740' r='108.5' />
      <circle cx='1326' cy='740' r='58' />
      <path d='M1100 656.5H1336' stroke='#c00' />
      <path d='M1218 539V774' stroke='#1c1' />

      <path d={cloudPath()} fill='#fff' stroke='#fff' />
      <text className='note' x='900' y='214'>QQ: 18285663</text>
      <text className='note' x='881' y='263'>TEL:15270818667</text>

      <g stroke='#f00f0f' strokeWidth='5' strokeLinecap='round' strokeLinejoin='round'>
        <path d='M898 576L890 604L871 646M884 585L894 597L904 624L913 645M882 617H906' />
        <path d='M960 571L947 610L935 649' />
        <path d='M987 583L982 609L968 650M988 578L1004 578Q1014 583 1011 592Q1005 602 984 610L1016 621L1030 633Q1034 637 1009 646Q988 648 965 636' />
      </g>
    </g>
  );
}

/* ---------- Floating pen palette ---------- */

const Palette = styled.section`
  position: absolute;
  top: 65px;
  left: 185px;
  width: 97px;
  height: 258px;
  background-color: #efefef;
  border: 1px solid #b8c4d0;
  border-right-color: #888;
  box-shadow: inset 0 0 0 1px #fafafa;
`;

const PaletteTitle = styled.h2`
  display: flex;
  align-items: center;
  justify-content: space-between;
  height: 24px;
  margin: 0;
  padding: 0 4px 2px 1px;
  font-size: 13px;
  font-weight: 400;
  color: #3f4a57;
  background: linear-gradient(#e3ebf3, #bccbdc);

  button {
    width: 15px;
    height: 15px;
    border: 1px solid #8494a6;
    border-radius: 2px;
    display: grid;
    place-items: center;
  }
`;

const PenGrid = styled.div`
  display: grid;
  grid-template-columns: repeat(3, 30px);
  grid-auto-rows: 28px;
  padding-left: 1px;
`;

const PenButton = styled.button`
  display: flex;
  align-items: center;
  justify-content: center;
  ${(props) =>
    props.$active &&
    css`
      background-color: #fafafa;
      border: 1px solid #888;
      border-right-color: #fff;
      border-bottom-color: #fff;
    `}
`;

const PenFields = styled.div`
  display: flex;
  gap: 5px;
  padding: 10px 4px 5px;
`;

const PenField = styled.label`
  display: flex;
  align-items: center;
  width: 40px;
  height: 23px;
  padding-left: 3px;
  background-color: #fff;
  border: 2px solid #888;
  border-right-color: #bbb;
  border-bottom-color: #bbb;

  select {
    appearance: none;
    flex: 1;
    min-width: 0;
    width: 0;
  }

  > span:last-child {
    margin-right: 4px;
  }
`;

const PenBrand = styled.a`
  display: block;
  text-align: center;
  color: #e01020;
  text-decoration: none;
  line-height: 20px;
`;

const penTools = [
  'eraser', 'dropper', 'bucket', 'marker', 'redLine', 'redArrow', 'redRect', 'redEllipse', 'redBox',
  'redOval', 'redA', 'grayAA', 'board', 'screen', 'magnify', 'oliveSave', 'oliveOpen', 'diamond',
];

/* ---------- Command line ---------- */

const Command = styled.section`
  display: flex;
  margin: 0 5px 0 4px;
  font-family: 'Noto Sans CJK SC', sans-serif;
  font-size: 19px;
  white-space: pre;
`;

const CommandSide = styled.div`
  flex: none;
  width: 24px;
  display: flex;
  flex-direction: column;
  align-items: center;
  gap: 3px;
  padding-top: 4px;
  background: linear-gradient(#7a7c7a, #3c3e3c);

  &::before {
    content: '';
    width: 18px;
    height: 7px;
    background: repeating-linear-gradient(90deg, #aaa 0 1px, transparent 1px 3px);
  }

  path {
    stroke: #fff;
  }
`;

const CommandBody = styled.div`
  flex: 1;
`;

const History = styled.div`
  height: 59px;
  padding: 8px 3px 0;
  background-color: #c6c7c5;
  border-bottom: 2px solid #9c9c9c;
  color: #1414c8;

  p {
    margin: 0;
    height: 22px;
    line-height: 22px;
  }
`;

const Latin = styled.span`
  font-family: 'Liberation Mono', monospace;
  font-size: 17px;
`;

const Prompt = styled.div`
  display: flex;
  align-items: center;
  height: 26px;
  padding-left: 3px;
  line-height: 24px;
  background-color: #fff;
  color: #e416e4;

  input {
    flex: 1;
    font-family: 'Liberation Mono', monospace;
    font-size: 17px;
  }
`;

const Option = styled.span`
  background-color: #d4d4d4;

  b {
    color: #1414c8;
  }
`;

/* ---------- Status bar ---------- */

const Status = styled.footer`
  display: flex;
  align-items: stretch;
  height: 29px;
  padding: 2px 3px 2px 4px;
  border-bottom: 2px solid #666;
  background: linear-gradient(#5f615f, #8e908d 20%, #7d7f7c);
  font-size: 13px;
  color: #111;
`;

const Coords = styled.output`
  width: 214px;
  padding-left: 12px;
  align-self: center;
  font-family: 'Liberation Mono', monospace;
  font-size: 11px;
  color: #222;
`;

const Toggle = styled.button`
  flex: none;
  display: flex;
  align-items: center;
  justify-content: center;
  gap: 3px;
  padding: 0 2px 0 3px;
  ${(props) => props.$w && `width: ${props.$w}px;`}
  border-right: 1px solid #555;
  background: ${(props) =>
    props.$on ? 'linear-gradient(#e4f6f8, #8fc4cc)' : 'linear-gradient(#bcbebb, #989a97)'};
  ${(props) =>
    props.$latin &&
    css`
      font-family: 'Liberation Mono', monospace;
      font-size: 11px;
    `}
`;

const Tray = styled.div`
  display: flex;
  align-items: center;
  justify-content: space-around;
  width: 48px;
  margin: 0 6px 0 4px;
  border: 1px solid #444;
  background-color: #a8aaa7;
`;

const Fill = styled.span`
  flex: 1;
`;

const toggles = [
  ['INFER'], ['捕捉'], ['栅格'], ['正交', true], ['极轴'], ['对象捕捉', true], ['3DOSNAP'],
  ['对象追踪', true], ['DUCS'], ['DYN'], ['线宽', true], ['TPY'], ['QP'], ['SC'], ['上午'],
];

/* ---------- Channel watermark ---------- */

const Watermark = styled.div`
  position: absolute;
  top: 38px;
  right: 78px;
  width: 252px;
  color: #fff;
  opacity: 0.6;
  pointer-events: none;
`;

const WatermarkName = styled.div`
  display: flex;
  align-items: center;
  justify-content: space-between;
  font-family: 'Noto Sans CJK SC', sans-serif;
  font-size: 60px;
  font-weight: 500;
  line-height: 76px;

  b {
    width: 123px;
    height: 61px;
    line-height: 56px;
    font-size: 53px;
    text-align: center;
    border-radius: 6px;
    background-color: #fff;
    color: #000;
  }
`;

const WatermarkSite = styled.div`
  padding-left: 3px;
  font-family: 'DejaVu Sans', sans-serif;
  font-size: 35px;
  font-weight: 700;
  line-height: 46px;
`;

const menus = [
  '文件(F)', '编辑(E)', '视图(V)', '插入(I)', '格式(O)', '工具(T)', '绘图(D)', '标注(N)', '修改(M)',
  '参数(P)', '窗口(W)', '帮助(H)',
];

function Header() {
  return (
    <TitleBar>
      <AppButton aria-label='Application menu'>
        <svg width='30' height='34' viewBox='0 0 30 34'>
          <path d='M10 2l7-1 11 26-7 4-4-7-7 2-1 6-8-1z' fill='#d42a2e' />
          <path d='M17 1l11 26-7 4L12 8z' fill='#b3191d' />
          <path d='M13 13l4 8-6 2z' fill='#6d0a0d' />
          <path d='M10 2L1 31l6-2 6-18z' fill='#ee5f58' />
        </svg>
        <Triangle $color='#333' />
      </AppButton>
      <TitleRows>
        <TitleRow>
          {['sheet', 'folder', 'floppy', 'floppyEdit', 'cloudSheet'].map((name) => (
            <IconButton key={name} aria-label={name}>
              <Icon name={name} />
            </IconButton>
          ))}
          <IconButton $w={14} aria-label='More'><Triangle $color='#555' /></IconButton>
          <IconButton aria-label='Print'><Icon name='printer' /></IconButton>
          <IconButton aria-label='Undo'><Icon name='undo' /></IconButton>
          <IconButton $w={13} aria-label='Undo list'><Triangle $color='#555' /></IconButton>
          <IconButton $dim aria-label='Redo'><Icon name='redo' /></IconButton>
          <IconButton $w={15} aria-label='Redo list'><Triangle $color='#444' /></IconButton>
          <Select as={WorkspaceField} label='Workspace' value='AutoCAD 经典' w={193} pad={2} gap={1} caret='#222'>
            <Icon name='gear' />
          </Select>
          <IconButton $w={16} aria-label='Customize'><Triangle $color='#111' /></IconButton>
          <Title>
            <span>AutoCAD 2013</span>
            <span>3-2.dwg</span>
          </Title>
          <IconButton $w={15} aria-label='Collapse'><Arrow $dir='right' /></IconButton>
          <SearchBox aria-label='Search' placeholder='键入关键字或短语' />
          <IconButton $w={28} aria-label='Find'><Icon name='binoculars' /></IconButton>
          <IconButton $w={24} aria-label='Account'><Icon name='user' /></IconButton>
          <SignIn>登录</SignIn>
          <Spacer $w={62} />
          <IconButton $w={12} aria-label='Sign in list'><Triangle $color='#444' /></IconButton>
          <IconButton $w={28} aria-label='Exchange'><Icon name='exchange' size={18} /></IconButton>
          <IconButton $w={24} aria-label='Network'><Icon name='a360' /></IconButton>
          <IconButton $w={12} aria-label='Network list'><Triangle $color='#444' /></IconButton>
          <Spacer $w={11} />
          <IconButton $w={28} aria-label='Help'><Icon name='helpRound' /></IconButton>
          <IconButton $w={12} aria-label='Help list'><Triangle $color='#444' /></IconButton>
          <Spacer $w={18} />
          <IconButton $w={18} aria-label='Minimize'><Icon name='min' size={18} /></IconButton>
          <IconButton $w={18} aria-label='Maximize'><Icon name='max' size={18} /></IconButton>
          <IconButton $w={18} aria-label='Close'><Icon name='close' size={18} /></IconButton>
        </TitleRow>
        <TitleRow $h={25}>
          <Menu>
            {menus.map((name) => (
              <button key={name}>{name}</button>
            ))}
          </Menu>
          <IconButton $w={18} $dim aria-label='Minimize drawing'><Icon name='min' size={18} /></IconButton>
          <IconButton $w={18} $dim aria-label='Restore drawing'><Icon name='restore' size={18} /></IconButton>
          <IconButton $w={18} $dim aria-label='Close drawing'><Icon name='close' size={18} /></IconButton>
        </TitleRow>
      </TitleRows>
    </TitleBar>
  );
}

function Toolbars() {
  return (
    <ToolRows>
      <ToolRow>
        <Grip $w={8} />
        <Bar role='toolbar' aria-label='Standard'>
          {standardTools.map((name, i) => {
            if (name === '|') return <Divider key={i} />;
            if (name === 'v') return <Caret key={i} aria-label='List'><Triangle /></Caret>;
            return (
              <ToolButton key={i} aria-label={name} $dim={name === 'undo' || name === 'redo'}>
                <Icon name={name} />
              </ToolButton>
            );
          })}
        </Bar>
        <Grip />
        <Bar role='toolbar' aria-label='Styles'>
          <ToolButton aria-label='Text style'><Icon name='textStyle' /></ToolButton>
          <Select label='Text style' value='Standard' w={128} pad={19} />
          <Divider />
          <ToolButton aria-label='Dimension style'><Icon name='dimStyle' /></ToolButton>
          <Select label='Dimension style' value='习题' w={128} pad={19} />
          <Divider />
          <ToolButton aria-label='Table style'><Icon name='tableStyle' /></ToolButton>
          <Select label='Table style' value='Standard' w={128} pad={4} />
          <Divider />
          <ToolButton aria-label='Multileader style'><Icon name='leaderStyle' /></ToolButton>
          <Select label='Multileader style' value='Standard' w={128} pad={19} />
        </Bar>
      </ToolRow>
      <ToolRow>
        <Grip $w={8} />
        <Bar role='toolbar' aria-label='Workspaces'>
          <Select label='Workspaces' value='AutoCAD 经典' w={188} pad={14} />
          <ToolButton aria-label='Workspace settings'><Icon name='gear' /></ToolButton>
          <ToolButton aria-label='My workspace'><Icon name='wsSave' /></ToolButton>
        </Bar>
        <Grip $w={10} />
        <Bar role='toolbar' aria-label='Layers'>
          <ToolButton aria-label='Layer properties'><Icon name='layerProps' /></ToolButton>
          <Select label='Layer' value='0' w={320} pad={2}>
            <Icon name='bulb' size={18} />
            <Icon name='sun' size={18} />
            <Icon name='vpFreeze' size={18} />
            <Icon name='lockBlue' size={18} />
            <Swatch />
            <Spacer $w={6} />
          </Select>
          <ToolButton aria-label='Make current'><Icon name='layerCur' /></ToolButton>
          <ToolButton aria-label='Layer previous'><Icon name='layerPrev' /></ToolButton>
          <ToolButton aria-label='Layer states'><Icon name='layerState' /></ToolButton>
        </Bar>
        <Grip $w={10} />
        <Bar role='toolbar' aria-label='Properties'>
          <Select label='Color' value='ByLayer' w={161} pad={5} gap={3} mono><Swatch /></Select>
          <Divider />
          <Select label='Linetype' value='ByLayer' w={171} pad={4} gap={5} mono><Stroke $w={65} /></Select>
          <Divider />
          <Select label='Lineweight' value='ByLayer' w={134} pad={4} gap={5} mono><Stroke $w={38} /></Select>
          <Divider />
          <Select label='Plot style' value='BYCOLOR' w={128} pad={9} mono />
        </Bar>
      </ToolRow>
    </ToolRows>
  );
}

function TabSlash() {
  return (
    <svg width='10' height='17' viewBox='0 0 10 17'>
      <path d='M9 0L2 17' stroke='#444' />
    </svg>
  );
}

function CadCanvas() {
  return (
    <Center>
      <CanvasRow>
        <Canvas>
          <Drawing viewBox='254 117 1418 816'>
            <PartDrawing />
            <Sketch />
          </Drawing>
          <ViewLabel>[-][俯视][二维线框]</ViewLabel>
          <Tooltip role='tooltip'>正交: 17.8238  &lt; 180°</Tooltip>
          <ViewCube>
            <svg width='140' height='150' viewBox='0 -5 140 150'>
              <circle cx='70' cy='70' r='57' fill='none' stroke='#2b2c2b' strokeWidth='13' />
              <path d='M42 42h56v56H42z' fill='#a0a2a0' />
              <text x='70' y='18'>北</text>
              <text x='70' y='139'>南</text>
              <text x='10' y='78'>西</text>
              <text x='130' y='78'>东</text>
              <text x='70' y='81' style={{ fontSize: 32, fill: '#6c6e6c' }}>上</text>
            </svg>
            <WcsButton>WCS</WcsButton>
          </ViewCube>
        </Canvas>
        <VScroll>
          <Arrow $dir='up' />
          <VThumb />
          <Arrow $dir='down' />
        </VScroll>
      </CanvasRow>
      <TabRow>
        {['|◀', '◀', '▶', '▶|'].map((mark) => (
          <TabNav key={mark} aria-label={mark}>
            <svg width='11' height='10' viewBox='0 0 11 10'>
              <path d={mark.includes('◀') ? 'M8 0v10L3 5z' : 'M3 0v10l5-5z'} fill='#555' />
              {mark === '|◀' && <path d='M1.5 0v10' stroke='#555' />}
              {mark === '▶|' && <path d='M9.5 0v10' stroke='#555' />}
            </svg>
          </TabNav>
        ))}
        <Tab $active>模型</Tab>
        <Tab>Layout1</Tab>
        <TabSlash />
        <Tab>Layout2</Tab>
        <TabSlash />
        <HScroll>
          <Arrow $dir='left' />
          <HThumb />
          <Arrow $dir='right' />
        </HScroll>
      </TabRow>
    </Center>
  );
}

function CommandLine() {
  return (
    <Command>
      <CommandSide>
        <button aria-label='Close command line'><Icon name='close' size={18} /></button>
        <button aria-label='Customize command line'><Icon name='wrench' size={18} /></button>
      </CommandSide>
      <CommandBody>
        <History>
          <p>命令<Latin>:  CIRCLE</Latin></p>
          <p>
            指定圆的圆心或<Latin> [</Latin>三点<Latin>(3P)/</Latin>两点<Latin>(2P)/</Latin>切点、切点、半径
            <Latin>(T)]:</Latin>
          </p>
        </History>
        <Prompt>
          <Icon name='prompt' />
          <IconButton $w={16} aria-label='Recent commands'><Triangle /></IconButton>
          <Latin><b>CIRCLE </b></Latin>
          <span>指定圆的半径或</span>
          <Latin> [</Latin>
          <Option>直径<Latin>(<b>D</b>)</Latin></Option>
          <Latin>] &lt;9.5000&gt;: </Latin>
          <input aria-label='Command input' defaultValue='34/2' />
        </Prompt>
      </CommandBody>
    </Command>
  );
}

function StatusBar() {
  return (
    <Status>
      <Coords>230.1891, 126.5770, 0.0000</Coords>
      {toggles.map(([name, on]) => (
        <Toggle key={name} $on={on} $latin={/^[0-9A-Z]+$/.test(name)}>
          {name}
        </Toggle>
      ))}
      <Fill />
      <Toggle>模型</Toggle>
      <Toggle $w={24} aria-label='Model'><Icon name='modelTab' size={18} /></Toggle>
      <Toggle $w={24} aria-label='Quick view'><Icon name='quickView' size={18} /></Toggle>
      <Spacer $w={19} />
      <Toggle $w={57} $latin>
        <Icon name='annot' size={18} />
        1:1
        <Triangle $color='#111' />
      </Toggle>
      <Toggle $w={24} aria-label='Annotation visibility'><Icon name='annotSun' size={18} /></Toggle>
      <Toggle $w={24} aria-label='Auto scale'><Icon name='annotOff' size={18} /></Toggle>
      <Spacer $w={6} />
      <Toggle $w={24} aria-label='Workspace switching'><Icon name='gear' size={18} /></Toggle>
      <Toggle $w={24} aria-label='Lock'><Icon name='unlock' size={18} /></Toggle>
      <Toggle $w={24} aria-label='Isolate'><Icon name='isolate' size={18} /></Toggle>
      <Tray>
        <Icon name='hardware' size={18} />
        <Icon name='bulb' size={18} />
      </Tray>
      <IconButton $w={14} aria-label='Status menu'><Triangle $color='#111' /></IconButton>
      <Toggle $w={21} aria-label='Clean screen'><Icon name='clean' size={18} /></Toggle>
      <svg width='20' height='24' viewBox='0 0 20 24'>
        <path d='M15 12h2M10 16h2M15 16h2M5 20h2M10 20h2M15 20h2' stroke='#ddd' strokeWidth='2' />
      </svg>
    </Status>
  );
}

function PenPalette() {
  return (
    <Palette>
      <PaletteTitle>
        电子教鞭
        <button aria-label='Close palette'><Icon name='close' size={11} /></button>
      </PaletteTitle>
      <PenGrid>
        {penTools.map((name) => (
          <PenButton key={name} $active={name === 'marker'} aria-label={name}>
            <Icon name={name} />
          </PenButton>
        ))}
      </PenGrid>
      <PenFields>
        <PenField>
          <select aria-label='Pen width' defaultValue='4'>
            <option>4</option>
          </select>
          <Triangle $color='#111' />
        </PenField>
        <PenField>
          <Swatch $size={17} $color='#f00' />
          <select aria-label='Pen color' defaultValue=''>
            <option value='' aria-label='Red' />
          </select>
          <Triangle $color='#111' />
        </PenField>
      </PenFields>
      <PenBrand href='#'>红烛软件</PenBrand>
    </Palette>
  );
}

function App() {
  return (
    <>
      <GlobalStyle />
      <Page>
        <Window>
          <Header />
          <Toolbars />
          <Main>
            <Dock $w={66} $pad={4}>
              <DockColumn><VToolbar label='Draw' items={drawTools} /></DockColumn>
              <DockColumn><VToolbar label='Dimension' items={dimTools} /></DockColumn>
            </Dock>
            <CadCanvas />
            <Dock $w={38} $pad={5}>
              <DockColumn>
                <VToolbar label='Modify' items={modifyTools} />
                <VToolbar label='Draw order' items={orderTools} />
              </DockColumn>
            </Dock>
          </Main>
          <CommandLine />
          <StatusBar />
        </Window>
        <PenPalette />
        <Watermark>
          <WatermarkName>
            <span>搜狐</span>
            <b>视频</b>
          </WatermarkName>
          <WatermarkSite>tv.sohu.com</WatermarkSite>
        </Watermark>
      </Page>
    </>
  );
}

export default App;
